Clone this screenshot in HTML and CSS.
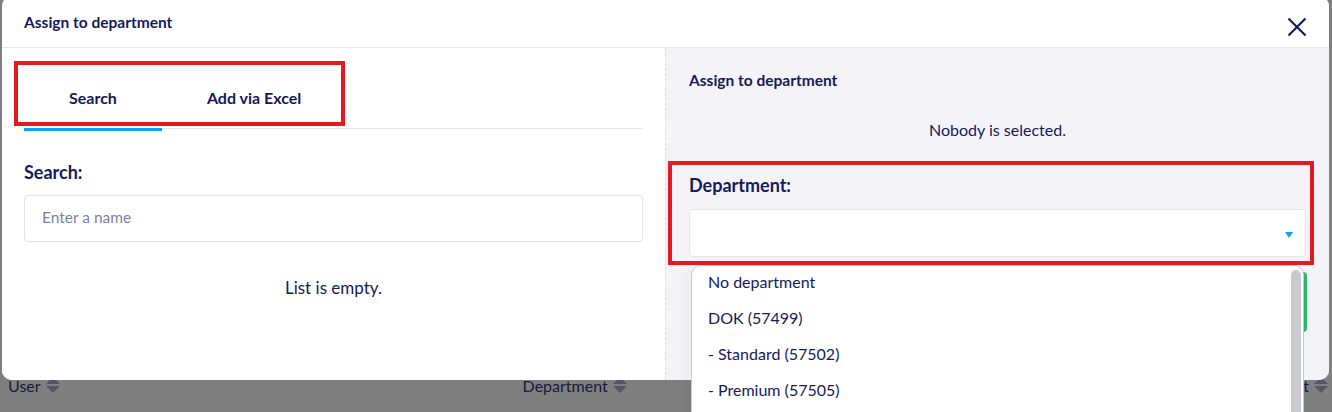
FILE: index.html
```html
<!DOCTYPE html>
<html lang="en">
<head>
<meta charset="utf-8">
<title>Assign to department</title>
<link rel="stylesheet" href="styles.css">
</head>
<body>
<div class="backdrop">
  <div class="table-head">
    <div class="th th-user">User <span class="sort"><i class="up"></i><i class="down"></i></span></div>
    <div class="th th-dept">Department <span class="sort"><i class="up"></i><i class="down"></i></span></div>
    <div class="th th-last">Assignment <span class="sort"><i class="up"></i><i class="down"></i></span></div>
  </div>
</div>

<div class="modal">
  <div class="modal-header">
    <h1 class="modal-title">Assign to department</h1>
    <button class="close" aria-label="Close">
      <svg width="20" height="20" viewBox="0 0 20 20"><path d="M1.5 1.5 L18.5 18.5 M18.5 1.5 L1.5 18.5" stroke="#141a5a" stroke-width="2.2" fill="none"/></svg>
    </button>
  </div>
  <div class="modal-body">
    <section class="pane pane-left">
      <div class="tabs">
        <div class="tab active">Search</div>
        <div class="tab">Add via Excel</div>
      </div>
      <label class="field-label">Search:</label>
      <div class="input"><span class="placeholder">Enter a name</span></div>
      <p class="empty">List is empty.</p>
    </section>
    <section class="pane pane-right">
      <h2 class="pane-title">Assign to department</h2>
      <p class="nobody">Nobody is selected.</p>
      <div class="dept-group">
        <label class="field-label">Department:</label>
        <div class="select"><span class="caret"></span></div>
        <div class="actions"><button class="save"></button></div>
      </div>
    </section>
  </div>
  <div class="mark mark-tabs"></div>
  <div class="mark mark-dept"></div>
  <div class="dropdown">
    <ul class="options">
      <li>No department</li>
      <li>DOK (57499)</li>
      <li>- Standard (57502)</li>
      <li>- Premium (57505)</li>
    </ul>
    <div class="scrollbar"></div>
  </div>
</div>
</body>
</html>
```
FILE: styles.css
```css
* { box-sizing: border-box; }
html, body { margin: 0; padding: 0; }
body {
  width: 1332px;
  height: 412px;
  overflow: hidden;
  position: relative;
  background: #7f7f7f;
  font-family: Lato, "Noto Sans", sans-serif;
  color: #141a5a;
}

/* background (dimmed) table */
.backdrop { padding-top: 373px; }
.table-head {
  display: flex;
  height: 24px;
  align-items: center;
  font-size: 16px;
  color: #171a3d;
}
.th { display: flex; align-items: center; gap: 5px; white-space: nowrap; }
.th-user { margin-left: 8px; }
.th-dept { margin-left: 463px; }
.th-last { margin-left: auto; margin-right: 4px; }
.sort { display: inline-flex; flex-direction: column; gap: 2px; }
.sort i { display: block; width: 0; height: 0; border-left: 7px solid transparent; border-right: 7px solid transparent; }
.sort .up { border-bottom: 7px solid #555566; }
.sort .down { border-top: 7px solid #555566; }

/* modal */
.modal {
  position: absolute;
  left: 2px;
  top: -4px;
  width: 1327px;
  height: 384px;
  background: #fff;
  border-radius: 10px;
  display: flex;
  flex-direction: column;
}
.modal-header {
  height: 52px;
  padding: 0 22px 0 22px;
  display: flex;
  align-items: center;
  justify-content: space-between;
  border-bottom: 1px solid #e5e6ee;
}
.modal-title { margin: 0; font-size: 15.5px; font-weight: 700; color: #141a5a; }
.close {
  border: 0; background: none; padding: 0; width: 20px; height: 20px;
  margin-right: 0; margin-top: 10px; display: block;
}
.close svg { display: block; }

.modal-body {
  flex: 1;
  display: grid;
  grid-template-columns: 663px 1fr;
}
.pane-left { padding: 0 22px; background: #fff; border-bottom-left-radius: 10px; }
.pane-right {
  background: #f4f4f8;
  border-left: 1px dashed #dcdde6;
  padding: 22px 23px 0 23px;
  border-bottom-right-radius: 10px;
}

/* tabs */
.tabs {
  display: flex;
  margin-top: 18px;
  height: 63px;
  border-bottom: 1px solid #e3e5ec;
}
.tab {
  height: 65px;
  padding: 0 45px 0;
  display: flex;
  align-items: center;
  font-size: 16px;
  font-weight: 700;
  color: #141a5a;
  border-bottom: 3px solid transparent;
}
.tab.active { border-bottom-color: #0aa3f4; }

.field-label {
  display: block;
  font-size: 18px;
  font-weight: 700;
  line-height: 24px;
  color: #141a5a;
}
.pane-left .field-label { margin-top: 31px; }
.input {
  margin-top: 11px;
  height: 47px;
  border: 1px solid #e1e2ea;
  border-radius: 4px;
  background: #fff;
  display: flex;
  align-items: center;
  padding: 0 0 3px 17px;
}
.placeholder { font-size: 15.5px; color: #7b7fa8; }
.empty {
  margin: 34px 0 0;
  text-align: center;
  font-size: 17px;
  line-height: 24px;
  color: #141a5a;
}

/* right pane */
.pane-title { margin: 0; font-size: 15.5px; font-weight: 700; line-height: 20px; color: #141a5a; }
.nobody { margin: 30px 0 0; text-align: center; font-size: 16px; line-height: 20px; color: #141a5a; }
.dept-group { margin-top: 33px; }
.select {
  margin-top: 12px;
  height: 48px;
  background: #fff;
  border: 1px solid #e3e4ec;
  border-radius: 4px;
  display: flex;
  align-items: center;
  justify-content: flex-end;
  padding: 4px 12px 0 0;
}
.caret { width: 0; height: 0; border-left: 4px solid transparent; border-right: 4px solid transparent; border-top: 6px solid #0aa3f4; }
.actions { display: flex; justify-content: flex-end; margin-top: 15px; margin-right: -1px; }
.save { width: 160px; height: 60px; border: 0; border-radius: 4px; background: #2fb86c; }

/* annotation marks */
.mark { position: absolute; border: 4px solid #e21b22; pointer-events: none; }
.mark-tabs { left: 12px; top: 65px; width: 331px; height: 65px; }
.mark-dept { left: 666px; top: 165px; width: 646px; height: 104px; }

/* dropdown */
.dropdown {
  position: absolute;
  left: 689px;
  top: 269px;
  width: 613px;
  height: 160px;
  background: #fff;
  border: 1px solid #c9cad2;
  border-radius: 10px 10px 0 0;
  box-shadow: -6px 0 14px rgba(0,0,0,0.03);
}
.options { list-style: none; margin: 0; padding: 0 0 0 16px; }
.options li { height: 36px; line-height: 32px; font-size: 16px; color: #141a5a; }
.scrollbar {
  position: absolute;
  right: 2px;
  top: 4px;
  width: 10px;
  height: 200px;
  background: #c9c9d1;
  border-radius: 5px;
}
```
